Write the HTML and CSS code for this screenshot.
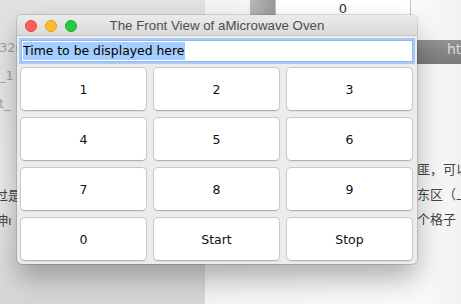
FILE: index.html
```html
<!DOCTYPE html>
<html lang="en">
<head>
    <meta charset="UTF-8">
    <title>The Front View of aMicrowave Oven</title>
    <link rel="stylesheet" href="styles.css">
</head>
<body>
    <div class="desktop">
        <div class="bg-left"></div>
        <div class="bg-strip"></div>
        <div class="bg-card"><span>0</span></div>
        <div class="bg-bar">htt</div>
        <div class="bg-text-right">
            <p>匪，可以</p>
            <p>东区（上</p>
            <p>个格子</p>
        </div>
        <div class="bg-text-left">
            <p>过是</p>
            <p>伸ı</p>
        </div>
        <div class="bg-edge">326<br>_1<br>t_</div>

        <div class="window">
            <div class="titlebar">
                <div class="lights">
                    <span class="light red"></span>
                    <span class="light yellow"></span>
                    <span class="light green"></span>
                </div>
                <div class="title">The Front View of aMicrowave Oven</div>
            </div>
            <div class="content">
                <div class="display"><span class="selected">Time to be displayed here</span></div>
                <div class="keypad">
                    <button>1</button>
                    <button>2</button>
                    <button>3</button>
                    <button>4</button>
                    <button>5</button>
                    <button>6</button>
                    <button>7</button>
                    <button>8</button>
                    <button>9</button>
                    <button>0</button>
                    <button>Start</button>
                    <button>Stop</button>
                </div>
            </div>
        </div>
    </div>
</body>
</html>
```

FILE: styles.css
```css
body {
    margin: 0;
    font-family: "DejaVu Sans", "Noto Sans CJK SC", sans-serif;
    overflow: hidden;
}
.desktop {
    position: relative;
    width: 461px;
    height: 304px;
    overflow: hidden;
    background: linear-gradient(to right, #e6e6e6 0, #f4f4f4 200px, #fafafa 420px, #f2f2f2 461px);
}
.bg-left {
    position: absolute;
    left: 0;
    top: 0;
    width: 205px;
    height: 304px;
    background: linear-gradient(to bottom, #e2e2e2, #ececec 60%, #d6d6d6);
}
.bg-strip {
    position: absolute;
    left: 250px;
    top: 0;
    width: 25px;
    height: 15px;
    background: linear-gradient(to right, #b8b8b8, #9a9a9a);
}
.bg-card {
    position: absolute;
    left: 275px;
    top: 0;
    width: 134px;
    height: 15px;
    background: #fff;
    border-left: 1px solid #c4c4c4;
    border-right: 1px solid #c4c4c4;
    text-align: center;
    font-size: 13px;
    line-height: 22px;
    color: #333;
    overflow: hidden;
}
.bg-card span {
    position: relative;
    top: -2px;
}
.bg-bar {
    position: absolute;
    left: 417px;
    top: 40px;
    width: 44px;
    height: 24px;
    background: linear-gradient(to bottom, #939393, #7a7a7a);
    color: #dcdcdc;
    font-size: 14px;
    line-height: 18px;
    padding-left: 30px;
    white-space: nowrap;
    overflow: hidden;
    box-sizing: border-box;
}
.bg-text-right {
    position: absolute;
    left: 417px;
    top: 157px;
    font-size: 13px;
    color: #444;
    white-space: nowrap;
}
.bg-text-right p,
.bg-text-left p {
    margin: 0;
    line-height: 25px;
}
.bg-text-left {
    position: absolute;
    left: -5px;
    top: 183px;
    font-size: 13px;
    color: #444;
    white-space: nowrap;
}
.bg-edge {
    position: absolute;
    left: -1px;
    top: 34px;
    font-size: 13px;
    color: #a4a4a4;
    line-height: 28px;
}

.window {
    position: absolute;
    left: 17px;
    top: 15px;
    width: 400px;
    height: 249px;
    background: #ececec;
    border-radius: 5px;
    box-shadow: 0 0 0 1px rgba(0, 0, 0, 0.12), 0 14px 28px rgba(0, 0, 0, 0.3);
    overflow: hidden;
}
.titlebar {
    position: relative;
    height: 21px;
    background: linear-gradient(to bottom, #ebebeb, #dadada);
    border-bottom: 1px solid #c4c4c4;
    box-sizing: border-box;
}
.lights {
    position: absolute;
    left: 8px;
    top: 5px;
    display: flex;
    gap: 8px;
}
.light {
    width: 12px;
    height: 12px;
    border-radius: 50%;
    box-sizing: border-box;
}
.red { background: #fe5f57; border: 1px solid #e0443e; }
.yellow { background: #febc2e; border: 1px solid #dea123; }
.green { background: #28c840; border: 1px solid #1aab29; }
.title {
    text-align: center;
    font-family: "Liberation Sans", Arial, sans-serif;
    font-size: 13.3px;
    line-height: 21px;
    color: #4d4d4d;
}
.content {
    padding: 3px 3px 0 3px;
}
.display {
    height: 22px;
    background: #fff;
    border: 1px solid #8fb8f0;
    box-shadow: 0 0 0 2px #a9c9f7;
    margin: 1px 1px 0 1px;
    box-sizing: border-box;
    font-size: 12.4px;
    line-height: 18px;
    padding: 1px 0 0 1px;
    color: #000;
}
.selected {
    background: #a5cdfd;
    display: inline-block;
    padding-right: 1px;
}
.keypad {
    display: grid;
    grid-template-columns: repeat(3, 127px);
    grid-auto-rows: 44px;
    gap: 6px;
    margin-top: 5px;
}
.keypad button {
    background: #fff;
    border: 1px solid #c8c8c8;
    border-bottom-color: #b0b0b0;
    border-radius: 5px;
    font-family: "DejaVu Sans", sans-serif;
    font-size: 12.5px;
    color: #111;
    box-shadow: 0 1px 0 rgba(0, 0, 0, 0.05);
    padding: 0;
}
```
